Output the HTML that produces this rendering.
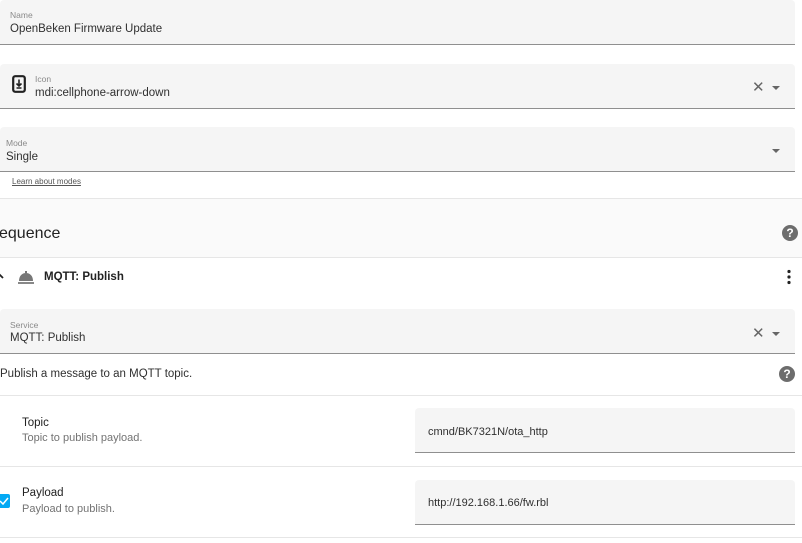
<!DOCTYPE html>
<html><head><style>
body{margin:0;width:802px;height:543px;overflow:hidden;background:#fff;font-family:"Liberation Sans",Arial,sans-serif;position:relative;color:#212121}
.a{position:absolute}
.f{position:absolute;background:#f5f5f5;border-bottom:1px solid #8f8f8f;border-radius:4px 4px 0 0}
.lbl{position:absolute;font-size:8.5px;color:#8a8a8a}
.val{position:absolute;font-size:11.5px;color:#303030}
.line{position:absolute;left:0;width:802px;height:1px;background:#e6e6e6}
.dd{position:absolute;width:0;height:0;border-left:4px solid transparent;border-right:4px solid transparent;border-top:4px solid #666}
.x{position:absolute;font-size:15px;color:#666;line-height:1}
.help{position:absolute;width:16px;height:16px;border-radius:50%;background:#6d6d6d;color:#fff;font-size:12px;font-weight:bold;text-align:center;line-height:16px}
</style></head><body>
<div class="f" style="left:0;top:0;width:795px;height:44px"></div>
<div class="lbl" style="left:10px;top:10px">Name</div>
<div class="val" style="left:10px;top:23px">OpenBeken Firmware Update</div>

<div class="f" style="left:0;top:64px;width:795px;height:44px"></div>
<svg class="a" style="left:12px;top:75px" width="14" height="18" viewBox="0 0 14 18"><rect x="1.2" y="1.2" width="11.6" height="15.6" rx="2" fill="none" stroke="#222" stroke-width="2.2"/><path d="M7 4.5v6M4.5 8.5L7 11l2.5-2.5M4.5 13h5" stroke="#222" stroke-width="1.6" fill="none"/></svg>
<div class="lbl" style="left:35px;top:74px">Icon</div>
<div class="val" style="left:35px;top:87px">mdi:cellphone-arrow-down</div>
<div class="x" style="left:752px;top:80px">✕</div>
<div class="dd" style="left:772px;top:86px"></div>

<div class="f" style="left:0;top:127px;width:795px;height:44px"></div>
<div class="lbl" style="left:6px;top:138px">Mode</div>
<div class="val" style="left:6px;top:151px">Single</div>
<div class="dd" style="left:772px;top:149px"></div>
<div class="a" style="left:12px;top:177px;font-size:8px;color:#555;text-decoration:underline">Learn about modes</div>

<div class="line" style="top:198px"></div>
<div class="a" style="left:0;top:199px;width:802px;height:58px;background:#fafafa"></div>
<div class="a" style="left:-1px;top:225px;font-size:16px;color:#222">equence</div>
<div class="help" style="left:782px;top:225px">?</div>
<div class="line" style="top:257px"></div>

<svg class="a" style="left:-2px;top:272px" width="10" height="8"><path d="M1 2L5 6" stroke="#222" stroke-width="1.8" fill="none"/></svg>
<svg class="a" style="left:17px;top:270px" width="18" height="14" viewBox="0 0 18 14"><path d="M2 11C2 6 5 3 9 3S16 6 16 11Z" fill="#777"/><rect x="1" y="12" width="16" height="2" fill="#888"/><rect x="8" y="1" width="2" height="2" fill="#777"/></svg>
<div class="a" style="left:44px;top:271px;font-size:11.5px;font-weight:bold;color:#222">MQTT: Publish</div>
<svg class="a" style="left:786px;top:269px" width="6" height="16"><circle cx="3" cy="2.5" r="1.6" fill="#222"/><circle cx="3" cy="8" r="1.6" fill="#222"/><circle cx="3" cy="13.5" r="1.6" fill="#222"/></svg>

<div class="f" style="left:0;top:309px;width:795px;height:44px"></div>
<div class="lbl" style="left:10px;top:320px">Service</div>
<div class="val" style="left:10px;top:332px">MQTT: Publish</div>
<div class="x" style="left:752px;top:326px">✕</div>
<div class="dd" style="left:772px;top:332px"></div>

<div class="a" style="left:0;top:368px;font-size:11.5px;color:#303030">Publish a message to an MQTT topic.</div>
<div class="help" style="left:779px;top:366px">?</div>
<div class="line" style="top:395px"></div>

<div class="a" style="left:22px;top:417px;font-size:11.5px;color:#222">Topic</div>
<div class="a" style="left:22px;top:432px;font-size:11px;color:#737373">Topic to publish payload.</div>
<div class="f" style="left:415px;top:408px;width:380px;height:44px"></div>
<div class="val" style="left:428px;top:426px;font-size:11px">cmnd/BK7321N/ota_http</div>
<div class="line" style="top:466px"></div>

<div class="a" style="left:-4px;top:494px;width:14px;height:14px;background:#03a9f4;border-radius:2px"></div>
<svg class="a" style="left:0;top:496px" width="10" height="10"><path d="M0 5L3 8L8 2" stroke="#fff" stroke-width="1.5" fill="none"/></svg>
<div class="a" style="left:22px;top:487px;font-size:11.5px;color:#222">Payload</div>
<div class="a" style="left:22px;top:503px;font-size:11px;color:#737373">Payload to publish.</div>
<div class="f" style="left:415px;top:480px;width:380px;height:44px"></div>
<div class="val" style="left:428px;top:497px;font-size:11px">http://192.168.1.66/fw.rbl</div>
<div class="line" style="top:537px"></div>
</body></html>
